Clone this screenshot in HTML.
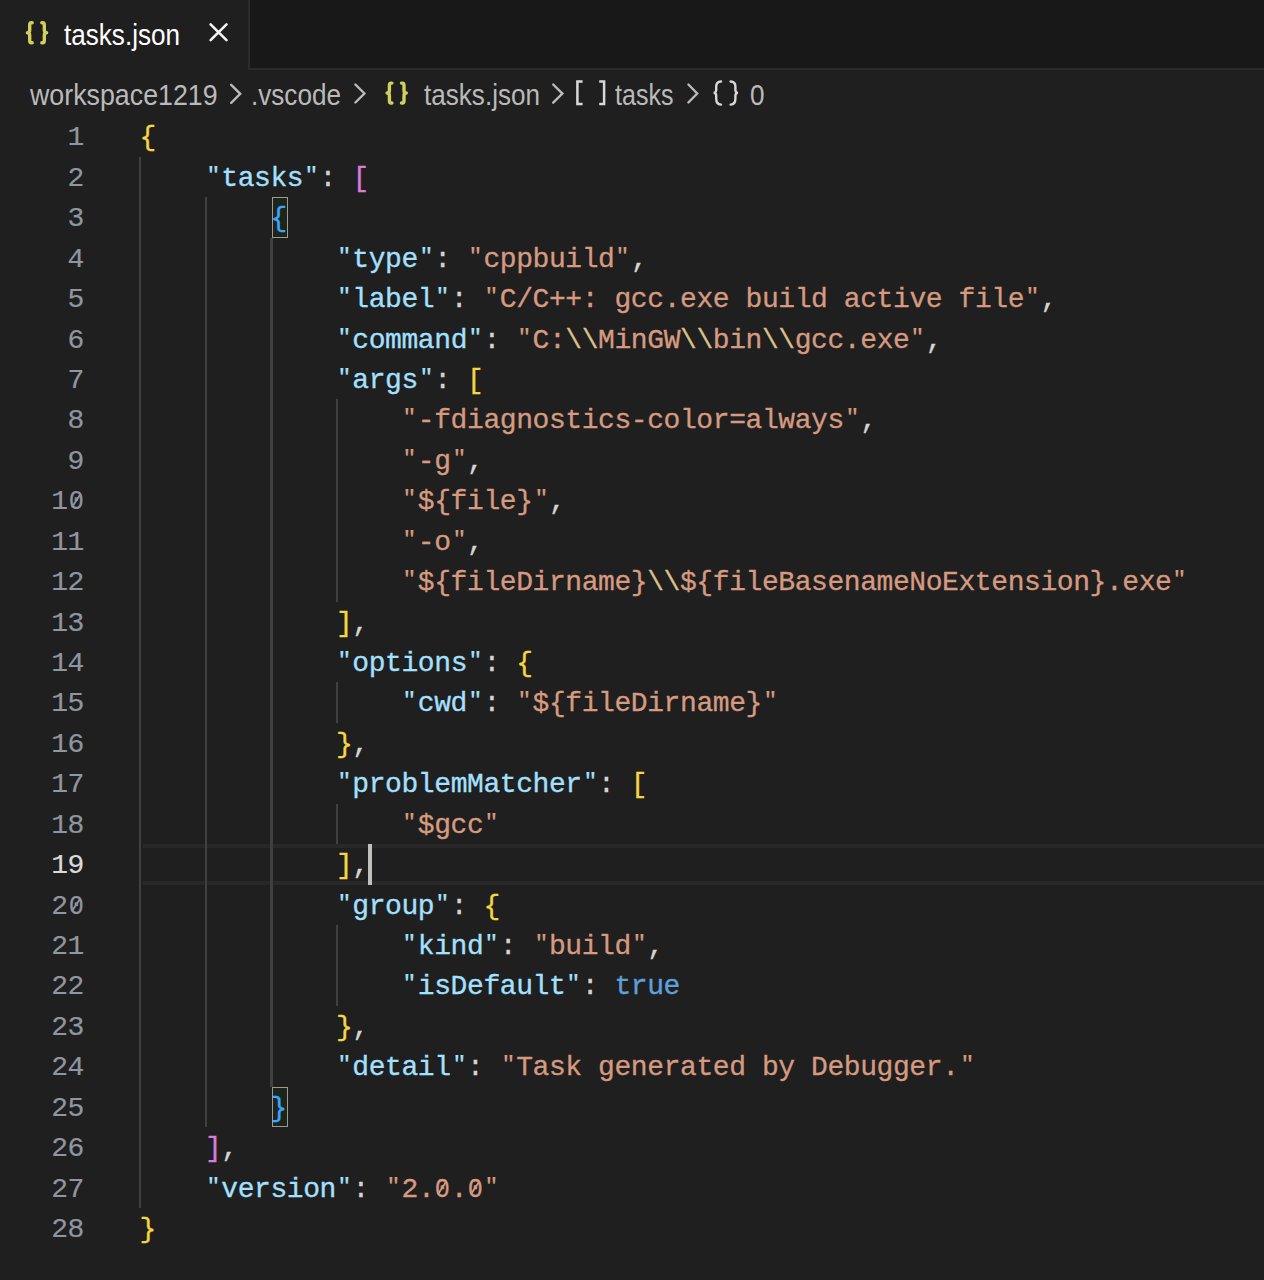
<!DOCTYPE html><html><head><meta charset="utf-8"><style>
*{margin:0;padding:0;box-sizing:border-box}
html,body{width:1264px;height:1280px;overflow:hidden;background:#1f1f1f}
body{position:relative;font-family:"Liberation Sans",sans-serif}
.tabbar{position:absolute;left:0;top:0;width:1264px;height:70px;background:#181818;border-bottom:2.1px solid #2b2b2b}
.tab{position:absolute;left:0;top:0;width:250px;height:70px;background:#1f1f1f;border-right:2.1px solid #2b2b2b}
.crumbs{position:absolute;left:0;top:69px;height:47px;width:1264px;color:#bababa;font-size:28px}
.ln{position:absolute;left:0;width:84px;text-align:right;font-family:"Liberation Mono",monospace;font-size:28px;letter-spacing:-0.420px;color:#6e7681;white-space:pre;-webkit-text-stroke:0.2px currentColor}
.code{position:absolute;font-family:"Liberation Mono",monospace;font-size:28px;letter-spacing:-0.420px;color:#cccccc;white-space:pre;-webkit-text-stroke:0.3px currentColor}
.k{color:#a4e0ff} .s{color:#d69a80} .p{color:#d4d4d4} .e{color:#dcc08a} .t{color:#5fa0dc}
.b1{color:#f5d742} .b2{color:#dc7ad8} .b3{color:#3aa6ff}
.box3{color:#3aa6ff}
.bbox{position:absolute;left:271.7px;width:16.6px;height:40.43px;border:1.8px solid #a09a8e;background:rgba(0,100,0,0.1)}
.z{position:relative}
.z{display:inline-block;transform:scaleX(0.9)}
.z::after{content:"";position:absolute;left:7.1px;top:10.4px;width:2.2px;height:16px;background:currentColor;transform:rotate(36deg)}
.q{display:inline-block;transform:scale(0.82,0.7);transform-origin:50% 11px}
.guide{position:absolute;width:2.1px;background:#404040}
.curline{position:absolute;left:143px;width:1121px;border-top:4.26px solid #282828;border-bottom:4.26px solid #282828}
.hdr{position:absolute;left:0;top:0}
.tablabel{position:absolute;left:63.7px;top:16.5px;font-size:30px;line-height:36px;color:#ffffff;transform-origin:0 0;transform:scaleX(0.87);white-space:pre}
.crumbs span{position:absolute;top:7.5px;line-height:36px;font-size:30px;white-space:pre;transform-origin:0 0;transform:scaleX(0.87)}
.c1{left:30px;transform:scaleX(0.893)!important} .c2{left:251px} .c3{left:423.5px} .c5{left:615px;transform:scaleX(0.835)!important} .c7{left:750px}
.cursor{position:absolute;width:4.3px;background:#c0c0be;z-index:5}
</style></head><body>
<div class="tabbar"></div><div class="tab"></div>
<svg class="hdr" width="1264" height="116" viewBox="0 0 1264 116"><path d="M32.20,22.80 L31.33,22.80 Q29.70,22.80 29.70,25.00 L29.70,30.10 Q29.70,32.70 27.40,32.70 Q29.70,32.70 29.70,35.30 L29.70,40.50 Q29.70,42.70 31.33,42.70 L32.20,42.70 M41.80,22.80 L42.67,22.80 Q44.30,22.80 44.30,25.00 L44.30,30.10 Q44.30,32.70 46.60,32.70 Q44.30,32.70 44.30,35.30 L44.30,40.50 Q44.30,42.70 42.67,42.70 L41.80,42.70" stroke="#d0d05c" stroke-width="3.4" fill="none" stroke-linecap="round" stroke-linejoin="round"/><path d="M391.90,83.10 L391.02,83.10 Q389.40,83.10 389.40,85.30 L389.40,90.40 Q389.40,93.00 387.10,93.00 Q389.40,93.00 389.40,95.60 L389.40,100.80 Q389.40,103.00 391.02,103.00 L391.90,103.00 M401.50,83.10 L402.38,83.10 Q404.00,83.10 404.00,85.30 L404.00,90.40 Q404.00,93.00 406.30,93.00 Q404.00,93.00 404.00,95.60 L404.00,100.80 Q404.00,103.00 402.38,103.00 L401.50,103.00" stroke="#d0d05c" stroke-width="3.4" fill="none" stroke-linecap="round" stroke-linejoin="round"/><path d="M210.6,24.4 L226.5,40.1 M226.5,24.4 L210.6,40.1" stroke="#f4f4f4" stroke-width="2.6" fill="none" stroke-linecap="round"/><path d="M231.2,84.8 L240.2,93.8 L231.2,102.8" stroke="#bababa" stroke-width="2.4" fill="none" stroke-linecap="round" stroke-linejoin="miter"/><path d="M355.4,84.5 L364.4,93.5 L355.4,102.5" stroke="#bababa" stroke-width="2.4" fill="none" stroke-linecap="round" stroke-linejoin="miter"/><path d="M553.2,84.5 L562.4,93.6 L553.2,102.7" stroke="#bababa" stroke-width="2.4" fill="none" stroke-linecap="round" stroke-linejoin="miter"/><path d="M688.4,84.5 L697.2,93.5 L688.4,102.5" stroke="#bababa" stroke-width="2.4" fill="none" stroke-linecap="round" stroke-linejoin="miter"/><path d="M582.6,81.4 H577.4 V103.9 H582.6 M599.2,81.4 H604.1 V103.9 H599.2" stroke="#d8d8d8" stroke-width="2.5" fill="none"/><path d="M721.00,81.50 C717.20,81.50 716.20,83.30 716.20,86.80 L716.20,90.30 C715.60,92.70 715.60,92.70 713.60,92.70 C715.60,92.70 716.20,95.10 716.20,95.10 L716.20,98.60 C716.20,102.10 717.20,104.60 721.00,104.60" stroke="#d8d8d8" stroke-width="2.4" fill="none" stroke-linecap="round"/><path d="M730.60,81.50 C734.40,81.50 735.40,83.30 735.40,86.80 L735.40,90.30 C736.00,92.70 736.00,92.70 738.00,92.70 C736.00,92.70 735.40,95.10 735.40,95.10 L735.40,98.60 C735.40,102.10 734.40,104.60 730.60,104.60" stroke="#d8d8d8" stroke-width="2.4" fill="none" stroke-linecap="round"/></svg>
<div class="tablabel">tasks.json</div>
<div class="crumbs"><span class="c1">workspace1219</span><span class="c2">.vscode</span><span class="c3">tasks.json</span><span class="c5">tasks</span><span class="c7">0</span></div>
<div class="cursor" style="left:367.6px;top:844.14px;height:40.43px"></div>
<div class="bbox" style="top:197.26px"></div><div class="bbox" style="top:1086.72px"></div>
<div class="curline" style="top:844.14px;height:40.43px"></div>
<div class="guide" style="left:139.40px;top:156.83px;height:1051.18px"></div>
<div class="guide" style="left:204.92px;top:197.26px;height:929.89px"></div>
<div class="guide" style="left:270.44px;top:237.69px;height:849.03px"></div>
<div class="guide" style="left:335.96px;top:399.41px;height:202.15px"></div>
<div class="guide" style="left:335.96px;top:682.42px;height:40.43px"></div>
<div class="guide" style="left:335.96px;top:803.71px;height:40.43px"></div>
<div class="guide" style="left:335.96px;top:925.00px;height:80.86px"></div>
<div class="ln" style="top:118.40px;line-height:40.43px;color:#8f96a0">1</div>
<div class="code" style="left:139.40px;top:118.40px;line-height:40.43px"><span class="b1">{</span></div>
<div class="ln" style="top:158.83px;line-height:40.43px;color:#8f96a0">2</div>
<div class="code" style="left:204.92px;top:158.83px;line-height:40.43px"><span class="k"><span class=q>"</span>tasks<span class=q>"</span></span><span class="p">: </span><span class="b2">[</span></div>
<div class="ln" style="top:199.26px;line-height:40.43px;color:#8f96a0">3</div>
<div class="code" style="left:270.44px;top:199.26px;line-height:40.43px"><span class="box3">{</span></div>
<div class="ln" style="top:239.69px;line-height:40.43px;color:#8f96a0">4</div>
<div class="code" style="left:335.96px;top:239.69px;line-height:40.43px"><span class="k"><span class=q>"</span>type<span class=q>"</span></span><span class="p">: </span><span class="s"><span class=q>"</span>cppbuild<span class=q>"</span></span><span class="p">,</span></div>
<div class="ln" style="top:280.12px;line-height:40.43px;color:#8f96a0">5</div>
<div class="code" style="left:335.96px;top:280.12px;line-height:40.43px"><span class="k"><span class=q>"</span>label<span class=q>"</span></span><span class="p">: </span><span class="s"><span class=q>"</span>C/C++: gcc.exe build active file<span class=q>"</span></span><span class="p">,</span></div>
<div class="ln" style="top:320.55px;line-height:40.43px;color:#8f96a0">6</div>
<div class="code" style="left:335.96px;top:320.55px;line-height:40.43px"><span class="k"><span class=q>"</span>command<span class=q>"</span></span><span class="p">: </span><span class="s"><span class=q>"</span>C:</span><span class="e">\\</span><span class="s">MinGW</span><span class="e">\\</span><span class="s">bin</span><span class="e">\\</span><span class="s">gcc.exe<span class=q>"</span></span><span class="p">,</span></div>
<div class="ln" style="top:360.98px;line-height:40.43px;color:#8f96a0">7</div>
<div class="code" style="left:335.96px;top:360.98px;line-height:40.43px"><span class="k"><span class=q>"</span>args<span class=q>"</span></span><span class="p">: </span><span class="b1">[</span></div>
<div class="ln" style="top:401.41px;line-height:40.43px;color:#8f96a0">8</div>
<div class="code" style="left:401.48px;top:401.41px;line-height:40.43px"><span class="s"><span class=q>"</span>-fdiagnostics-color=always<span class=q>"</span></span><span class="p">,</span></div>
<div class="ln" style="top:441.84px;line-height:40.43px;color:#8f96a0">9</div>
<div class="code" style="left:401.48px;top:441.84px;line-height:40.43px"><span class="s"><span class=q>"</span>-g<span class=q>"</span></span><span class="p">,</span></div>
<div class="ln" style="top:482.27px;line-height:40.43px;color:#8f96a0">1<span class=z>0</span></div>
<div class="code" style="left:401.48px;top:482.27px;line-height:40.43px"><span class="s"><span class=q>"</span>${file}<span class=q>"</span></span><span class="p">,</span></div>
<div class="ln" style="top:522.70px;line-height:40.43px;color:#8f96a0">11</div>
<div class="code" style="left:401.48px;top:522.70px;line-height:40.43px"><span class="s"><span class=q>"</span>-o<span class=q>"</span></span><span class="p">,</span></div>
<div class="ln" style="top:563.13px;line-height:40.43px;color:#8f96a0">12</div>
<div class="code" style="left:401.48px;top:563.13px;line-height:40.43px"><span class="s"><span class=q>"</span>${fileDirname}</span><span class="e">\\</span><span class="s">${fileBasenameNoExtension}.exe<span class=q>"</span></span></div>
<div class="ln" style="top:603.56px;line-height:40.43px;color:#8f96a0">13</div>
<div class="code" style="left:335.96px;top:603.56px;line-height:40.43px"><span class="b1">]</span><span class="p">,</span></div>
<div class="ln" style="top:643.99px;line-height:40.43px;color:#8f96a0">14</div>
<div class="code" style="left:335.96px;top:643.99px;line-height:40.43px"><span class="k"><span class=q>"</span>options<span class=q>"</span></span><span class="p">: </span><span class="b1">{</span></div>
<div class="ln" style="top:684.42px;line-height:40.43px;color:#8f96a0">15</div>
<div class="code" style="left:401.48px;top:684.42px;line-height:40.43px"><span class="k"><span class=q>"</span>cwd<span class=q>"</span></span><span class="p">: </span><span class="s"><span class=q>"</span>${fileDirname}<span class=q>"</span></span></div>
<div class="ln" style="top:724.85px;line-height:40.43px;color:#8f96a0">16</div>
<div class="code" style="left:335.96px;top:724.85px;line-height:40.43px"><span class="b1">}</span><span class="p">,</span></div>
<div class="ln" style="top:765.28px;line-height:40.43px;color:#8f96a0">17</div>
<div class="code" style="left:335.96px;top:765.28px;line-height:40.43px"><span class="k"><span class=q>"</span>problemMatcher<span class=q>"</span></span><span class="p">: </span><span class="b1">[</span></div>
<div class="ln" style="top:805.71px;line-height:40.43px;color:#8f96a0">18</div>
<div class="code" style="left:401.48px;top:805.71px;line-height:40.43px"><span class="s"><span class=q>"</span>$gcc<span class=q>"</span></span></div>
<div class="ln" style="top:846.14px;line-height:40.43px;color:#dadada">19</div>
<div class="code" style="left:335.96px;top:846.14px;line-height:40.43px"><span class="b1">]</span><span class="p">,</span></div>
<div class="ln" style="top:886.57px;line-height:40.43px;color:#8f96a0">2<span class=z>0</span></div>
<div class="code" style="left:335.96px;top:886.57px;line-height:40.43px"><span class="k"><span class=q>"</span>group<span class=q>"</span></span><span class="p">: </span><span class="b1">{</span></div>
<div class="ln" style="top:927.00px;line-height:40.43px;color:#8f96a0">21</div>
<div class="code" style="left:401.48px;top:927.00px;line-height:40.43px"><span class="k"><span class=q>"</span>kind<span class=q>"</span></span><span class="p">: </span><span class="s"><span class=q>"</span>build<span class=q>"</span></span><span class="p">,</span></div>
<div class="ln" style="top:967.43px;line-height:40.43px;color:#8f96a0">22</div>
<div class="code" style="left:401.48px;top:967.43px;line-height:40.43px"><span class="k"><span class=q>"</span>isDefault<span class=q>"</span></span><span class="p">: </span><span class="t">true</span></div>
<div class="ln" style="top:1007.86px;line-height:40.43px;color:#8f96a0">23</div>
<div class="code" style="left:335.96px;top:1007.86px;line-height:40.43px"><span class="b1">}</span><span class="p">,</span></div>
<div class="ln" style="top:1048.29px;line-height:40.43px;color:#8f96a0">24</div>
<div class="code" style="left:335.96px;top:1048.29px;line-height:40.43px"><span class="k"><span class=q>"</span>detail<span class=q>"</span></span><span class="p">: </span><span class="s"><span class=q>"</span>Task generated by Debugger.<span class=q>"</span></span></div>
<div class="ln" style="top:1088.72px;line-height:40.43px;color:#8f96a0">25</div>
<div class="code" style="left:270.44px;top:1088.72px;line-height:40.43px"><span class="box3">}</span></div>
<div class="ln" style="top:1129.15px;line-height:40.43px;color:#8f96a0">26</div>
<div class="code" style="left:204.92px;top:1129.15px;line-height:40.43px"><span class="b2">]</span><span class="p">,</span></div>
<div class="ln" style="top:1169.58px;line-height:40.43px;color:#8f96a0">27</div>
<div class="code" style="left:204.92px;top:1169.58px;line-height:40.43px"><span class="k"><span class=q>"</span>version<span class=q>"</span></span><span class="p">: </span><span class="s"><span class=q>"</span>2.<span class=z>0</span>.<span class=z>0</span><span class=q>"</span></span></div>
<div class="ln" style="top:1210.01px;line-height:40.43px;color:#8f96a0">28</div>
<div class="code" style="left:139.40px;top:1210.01px;line-height:40.43px"><span class="b1">}</span></div>
</body></html>
